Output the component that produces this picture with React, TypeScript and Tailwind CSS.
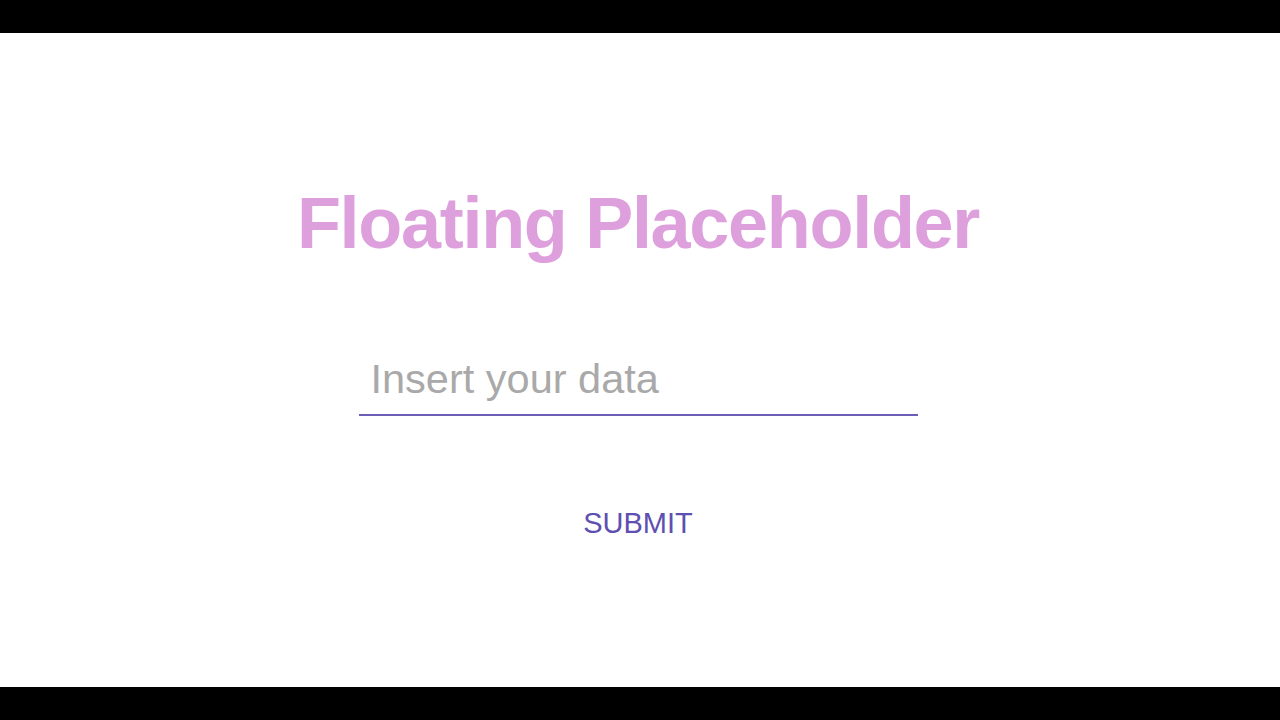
import React, { useState } from "react";

export default function App() {
  const [value, setValue] = useState("");

  return (
    <div className="flex h-screen w-full flex-col bg-black font-['Liberation_Sans',Arial,sans-serif]">
      <div className="h-[33px] shrink-0 bg-black" />

      <main className="flex flex-1 flex-col items-center bg-white pr-[4px] pt-[154px]">
        <h1 className="text-[72px] font-bold leading-none tracking-[-1.3px] text-[#dda0dd]">
          Floating Placeholder
        </h1>

        <form
          className="flex flex-col items-center"
          onSubmit={(e) => e.preventDefault()}
        >
          <input
            type="text"
            value={value}
            onChange={(e) => setValue(e.target.value)}
            placeholder="Insert your data"
            className="mt-[84px] h-[73px] w-[559px] border-b-2 border-[#6b5fb5] bg-transparent px-[12px] text-[41.5px] text-gray-700 outline-none placeholder:text-[#a9a9a9]"
          />

          <button
            type="submit"
            className="mt-[93px] text-[29px] leading-none text-[#5e50b0]"
          >
            SUBMIT
          </button>
        </form>
      </main>

      <div className="h-[33px] shrink-0 bg-black" />
    </div>
  );
}
